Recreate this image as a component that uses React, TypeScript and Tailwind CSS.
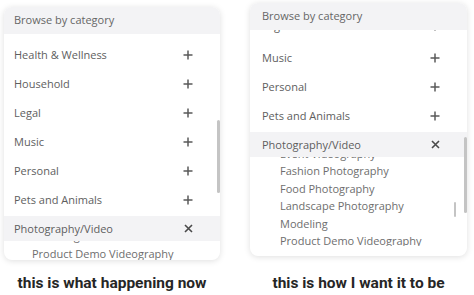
import React from "react";

const font = { fontFamily: '"Open Sans", "Liberation Sans", sans-serif' };

function PlusIcon() {
  return (
    <svg width="10" height="10" viewBox="0 0 10 10" className="text-[#5a5a5a]">
      <path d="M5 0.5v9M0.5 5h9" stroke="currentColor" strokeWidth="1.5" />
    </svg>
  );
}

function CloseIcon() {
  return (
    <svg width="9" height="9" viewBox="0 0 9 9" className="text-[#4a4a4a]">
      <path d="M1 1l7 7M8 1l-7 7" stroke="currentColor" strokeWidth="1.6" />
    </svg>
  );
}

const subItems = [
  "Commercial Photography",
  "Event Videography",
  "Fashion Photography",
  "Food Photography",
  "Landscape Photography",
  "Modeling",
  "Product Demo Videography",
];

function Row({ label, open = false, pad }: { label: string; open?: boolean; pad: string }) {
  return (
    <div
      className={[
        "flex h-[25px] shrink-0 items-center justify-between pr-[27px] text-[11px] text-[#5e5e5e]",
        pad,
        open ? "bg-[#f3f3f5]" : "",
      ].join(" ")}
    >
      <span className="translate-y-[1px]">{label}</span>
      {open ? <CloseIcon /> : <PlusIcon />}
    </div>
  );
}

function SubList({ className, offset, pad }: { className: string; offset: string; pad: string }) {
  return (
    <div className={"relative shrink-0 overflow-hidden " + className}>
      <div className={"flex flex-col " + offset}>
        {subItems.map((s) => (
          <div key={s} className={"flex h-[17.5px] shrink-0 items-center text-[11px] text-[#6e6e6e] " + pad}>
            {s}
          </div>
        ))}
      </div>
    </div>
  );
}

function Header({ pad }: { pad: string }) {
  return (
    <div className={"relative z-10 flex h-[27px] shrink-0 items-center bg-[#f3f3f5] text-[11px] text-[#666] " + pad}>
      Browse by category
    </div>
  );
}

export default function App() {
  return (
    <div className="flex h-[295px] w-[474px] bg-white" style={font}>
      {/* current behaviour */}
      <div className="ml-[4px] flex w-[216px] flex-col pt-[7px]">
        <div className="relative flex h-[257px] flex-col overflow-hidden rounded-[8px] bg-white shadow-[0_1px_6px_rgba(0,0,0,0.13)]">
          <Header pad="pl-[10px]" />
          <div className="flex flex-col gap-[4px] pt-[8px]">
            {["Health & Wellness", "Household", "Legal", "Music", "Personal", "Pets and Animals"].map((c) => (
              <Row key={c} label={c} pad="pl-[10px]" />
            ))}
            <div className="flex flex-col">
              <Row label="Photography/Video" open pad="pl-[10px]" />
              <SubList className="h-[22px]" offset="-mt-[101px]" pad="pl-[28px]" />
            </div>
          </div>
          <div className="absolute right-[0px] top-[113px] h-[73px] w-[3px] rounded-full bg-[#c4c4c4]" />
        </div>
        <div
          className="mt-[12px] text-center text-[15.5px] font-bold text-[#262626]"
          style={{ fontFamily: 'Roboto, "Liberation Sans", sans-serif' }}
        >
          this is what happening now
        </div>
      </div>

      {/* wanted behaviour */}
      <div className="ml-[30px] flex w-[217px] flex-col pt-[3px]">
        <div className="relative flex h-[257px] flex-col overflow-hidden rounded-[8px] bg-white shadow-[0_1px_6px_rgba(0,0,0,0.13)]">
          <Header pad="pl-[12px]" />
          <div className="min-h-0 flex-1 overflow-hidden">
            <div className="-mt-[14px] flex flex-col gap-[4px]">
              <div className="-translate-y-[3px]">
                <Row label="Legal" pad="pl-[12px]" />
              </div>
              {["Music", "Personal", "Pets and Animals"].map((c) => (
                <Row key={c} label={c} pad="pl-[12px]" />
              ))}
              <div className="flex flex-col">
                <Row label="Photography/Video" open pad="pl-[12px]" />
                <SubList className="h-[89px]" offset="-mt-[29.5px]" pad="pl-[30px]" />
              </div>
              <Row label="Real Estate" pad="pl-[12px]" />
            </div>
          </div>
          <div className="absolute right-[11px] top-[199px] h-[15px] w-[2px] rounded-full bg-[#c4c4c4]" />
          <div className="absolute right-[0px] top-[134px] h-[76px] w-[3px] rounded-full bg-[#c4c4c4]" />
        </div>
        <div
          className="mt-[16px] text-center text-[15.5px] font-bold text-[#262626]"
          style={{ fontFamily: 'Roboto, "Liberation Sans", sans-serif' }}
        >
          this is how I want it to be
        </div>
      </div>
    </div>
  );
}
